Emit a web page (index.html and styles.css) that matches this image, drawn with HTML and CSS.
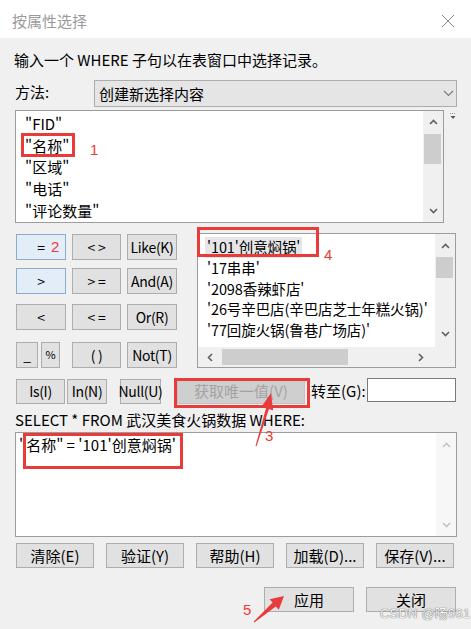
FILE: index.html
```html
<!DOCTYPE html>
<html lang="zh-CN">
<head>
<meta charset="utf-8">
<title>按属性选择</title>
<link rel="stylesheet" href="styles.css">
</head>
<body>
<div class="dialog">
  <div class="titlebar">
    <span class="title">按属性选择</span>
    <svg class="close" width="14" height="14" viewBox="0 0 14 14"><path d="M1 1L13 13M13 1L1 13" stroke="#8a8a8a" stroke-width="1" fill="none"/></svg>
  </div>

  <div class="content">
    <div class="prompt">输入一个 WHERE 子句以在表窗口中选择记录。</div>

    <div class="method">
      <span class="method-label">方法:</span>
      <div class="combo">
        <span>创建新选择内容</span>
        <svg width="11" height="7" viewBox="0 0 11 7"><path d="M1 1L5.5 5.5L10 1" fill="none" stroke="#7a7a7a" stroke-width="1.1"/></svg>
      </div>
    </div>

    <div class="fields-row">
      <div class="listbox fields">
        <ul class="items">
          <li>"FID"</li>
          <li>"名称"</li>
          <li>"区域"</li>
          <li>"电话"</li>
          <li>"评论数量"</li>
        </ul>
        <div class="vscroll">
          <div class="arrow up"><svg width="9" height="6" viewBox="0 0 9 6"><path d="M1 5L4.5 1.5L8 5" fill="none" stroke="#606060" stroke-width="1.6"/></svg></div>
          <div class="track"><div class="thumb fields-thumb"></div></div>
          <div class="arrow down"><svg width="9" height="6" viewBox="0 0 9 6"><path d="M1 1L4.5 4.5L8 1" fill="none" stroke="#606060" stroke-width="1.6"/></svg></div>
        </div>
      </div>
      <svg class="marker" width="6" height="7" viewBox="0 0 6 7"><path d="M0 0.5H6" stroke="#9a9a9a" stroke-width="1" stroke-dasharray="1 1"/><path d="M0.5 3H5.5L3 6Z" fill="#555"/></svg>
    </div>

    <div class="mid">
      <div class="ops">
        <div class="op-row">
          <button class="btn op hot">=</button>
          <button class="btn op">&lt; &gt;</button>
          <button class="btn op">Like(K)</button>
        </div>
        <div class="op-row gap8">
          <button class="btn op hot">&gt;</button>
          <button class="btn op">&gt; =</button>
          <button class="btn op">And(A)</button>
        </div>
        <div class="op-row gap10">
          <button class="btn op">&lt;</button>
          <button class="btn op">&lt; =</button>
          <button class="btn op">Or(R)</button>
        </div>
        <div class="op-row gap12">
          <div class="pair">
            <button class="btn op under">_</button>
            <button class="btn op pct">%</button>
          </div>
          <button class="btn op">( )</button>
          <button class="btn op">Not(T)</button>
        </div>
      </div>

      <div class="listbox values">
        <div class="values-main">
          <ul class="items">
            <li class="sel">'101'创意焖锅'</li>
            <li>'17串串'</li>
            <li>'2098香辣虾店'</li>
            <li>'26号辛巴店(辛巴店芝士年糕火锅)'</li>
            <li>'77回旋火锅(鲁巷广场店)'</li>
          </ul>
          <div class="vscroll">
            <div class="arrow up v-up"><svg width="9" height="6" viewBox="0 0 9 6"><path d="M1 5L4.5 1.5L8 5" fill="none" stroke="#606060" stroke-width="1.6"/></svg></div>
            <div class="track"><div class="thumb values-thumb"></div></div>
            <div class="arrow down v-down"><svg width="9" height="6" viewBox="0 0 9 6"><path d="M1 1L4.5 4.5L8 1" fill="none" stroke="#606060" stroke-width="1.6"/></svg></div>
          </div>
        </div>
        <div class="hscroll">
          <div class="harrow left"><svg width="6" height="9" viewBox="0 0 6 9"><path d="M5 1L1.5 4.5L5 8" fill="none" stroke="#606060" stroke-width="1.6"/></svg></div>
          <div class="hthumb"></div>
          <div class="hspace"></div>
          <div class="harrow right"><svg width="6" height="9" viewBox="0 0 6 9"><path d="M1 1L4.5 4.5L1 8" fill="none" stroke="#606060" stroke-width="1.6"/></svg></div>
          <div class="corner"></div>
        </div>
      </div>
    </div>

    <div class="row5">
      <button class="btn op w49">Is(I)</button>
      <button class="btn op w40 ml2">In(N)</button>
      <button class="btn op w41 ml13">Null(U)</button>
      <button class="btn disabled w128 ml16">获取唯一值(V)</button>
      <span class="goto">转至(G):</span>
      <div class="textbox"></div>
    </div>

    <div class="sql-label">SELECT * FROM 武汉美食火锅数据 WHERE:</div>

    <div class="expr">
      <div class="expr-text">"名称" = '101'创意焖锅'</div>
      <div class="vscroll light">
        <div class="arrow up e-up"><svg width="9" height="6" viewBox="0 0 9 6"><path d="M1 5L4.5 1.5L8 5" fill="none" stroke="#c4c4c4" stroke-width="1.6"/></svg></div>
        <div class="track"></div>
        <div class="arrow down e-down"><svg width="9" height="6" viewBox="0 0 9 6"><path d="M1 1L4.5 4.5L8 1" fill="none" stroke="#c4c4c4" stroke-width="1.6"/></svg></div>
      </div>
    </div>

    <div class="actions">
      <button class="btn w78">清除(E)</button>
      <button class="btn w78">验证(Y)</button>
      <button class="btn w78">帮助(H)</button>
      <button class="btn w78">加载(D)...</button>
      <button class="btn w78">保存(V)...</button>
    </div>

    <div class="final">
      <button class="btn w90">应用</button>
      <button class="btn w90">关闭</button>
    </div>
  </div>
</div>

<div class="anno">
  <div class="box b1"></div>
  <div class="box b4"></div>
  <div class="box b3"></div>
  <div class="box be"></div>
  <span class="num n1">1</span>
  <span class="num n2">2</span>
  <span class="num n3">3</span>
  <span class="num n4">4</span>
  <span class="num n5">5</span>
  <svg class="arrows" width="471" height="629" viewBox="0 0 471 629">
    <polygon fill="#ea3b3b" points="255.5,446 266.2,407.4 262,405.9 271,393 273.2,410.5 269,408.9 256.5,446.3"/>
    <polygon fill="#ea3b3b" points="253.7,621.6 272.6,602.6 269.6,599.2 284,596 278.8,609.8 275.8,606.4 254.3,622.4"/>
  </svg>
  <span class="watermark">CSDN @旸961</span>
</div>
</body>
</html>
```

FILE: styles.css
```css
* { box-sizing: border-box; margin: 0; padding: 0; }

html, body {
  width: 471px;
  height: 629px;
  overflow: hidden;
}

body {
  position: relative;
  background: #f0f0f0;
  font-family: "Noto Sans CJK SC", "Noto Sans", sans-serif;
  font-size: 15px;
  color: #000;
}

.titlebar {
  height: 38px;
  background: #fff;
  display: flex;
  align-items: center;
  justify-content: space-between;
  padding: 4px 16px 0 12px;
}

.title {
  color: #9a9a9a;
  line-height: 20px;
}

.content {
  padding: 0 14px 0 15px;
}

.prompt {
  margin-top: 12px;
  line-height: 20px;
  margin-left: -1px;
}

.method {
  margin-top: 10px;
  height: 27px;
  display: flex;
  align-items: center;
}

.method-label {
  width: 79px;
  line-height: 20px;
  margin-top: -3px;
}

.combo {
  flex: 1;
  height: 27px;
  background: #e5e5e5;
  border: 1px solid #adadad;
  display: flex;
  align-items: center;
  justify-content: space-between;
  padding: 0 2px 0 4px;
  line-height: 20px;
}

.fields-row {
  margin-top: 3px;
  display: flex;
  align-items: flex-start;
}

.listbox {
  background: #fff;
  border: 1px solid #9c9c9c;
}

.fields {
  width: 429px;
  height: 113px;
  display: flex;
}

.marker {
  margin-left: 6px;
  margin-top: 3px;
}

.items {
  list-style: none;
  flex: 1;
  overflow: hidden;
  white-space: nowrap;
  padding: 2px 0 0 7px;
}

.items li {
  padding: 0 2px;
  width: max-content;
}

.fields .items li {
  line-height: 21.7px;
}

.vscroll {
  width: 20px;
  background: #f0f0f0;
  display: flex;
  flex-direction: column;
}

.arrow {
  height: 22px;
  display: flex;
  align-items: center;
  justify-content: center;
  flex: none;
}

.track {
  flex: 1;
}

.thumb {
  background: #cdcdcd;
  margin: 0 2px 0 1px;
}

.fields-thumb {
  margin-top: 1px;
  height: 30px;
}

/* middle section */
.mid {
  margin-top: 10px;
  display: flex;
  align-items: flex-start;
}

.ops {
  margin-left: 1px;
  margin-top: 1px;
  width: 161px;
}

.op-row {
  display: grid;
  grid-template-columns: 50px 49px 50px;
  column-gap: 6px;
  height: 26px;
}

.gap8 { margin-top: 8px; }
.gap10 { margin-top: 10px; }
.gap12 { margin-top: 12px; }

.pair {
  display: flex;
  gap: 3px;
}

.btn {
  font-family: "Noto Sans CJK SC", "Noto Sans", sans-serif;
  font-size: 15px;
  line-height: 18px;
  color: #000;
  background: #e1e1e1;
  border: 1px solid #adadad;
  height: 26px;
  padding: 0;
  display: flex;
  align-items: center;
  justify-content: center;
  white-space: nowrap;
}

.btn.op {
  font-size: 14px;
  letter-spacing: -0.3px;
}

.btn.hot {
  background: #e3edf7;
  border-color: #8eabc9;
}

.under {
  width: 22px;
  align-items: flex-end;
  padding-bottom: 3px;
}

.btn.pct {
  width: 19px;
  font-size: 11px;
  padding-bottom: 3px;
}

.values {
  margin-left: 20px;
  width: 259px;
  height: 135px;
  display: flex;
  flex-direction: column;
}

.values-main {
  flex: 1;
  display: flex;
  min-height: 0;
}

.values .items {
  padding-top: 3px;
  font-size: 14.5px;
  letter-spacing: -0.1px;
}

.values .items li {
  line-height: 20.8px;
}

.values .items li.sel {
  background: #e6e6e6;
}

.v-up { height: 23px; }
.v-down { height: 26px; }

.values-thumb {
  height: 21px;
}

.hscroll {
  height: 20px;
  display: flex;
  background: #f0f0f0;
  flex: none;
}

.harrow {
  display: flex;
  align-items: center;
  justify-content: center;
}

.harrow.left { width: 24px; }
.harrow.right { width: 28px; }

.hthumb {
  width: 126px;
  margin: 2px 0 2px 0;
  background: #cdcdcd;
}

.hspace { flex: 1; }

.corner {
  width: 20px;
  background: #f0f0f0;
}

/* row 5 */
.row5 {
  margin-top: 9px;
  margin-left: 1px;
  display: flex;
  align-items: center;
  height: 26px;
}

.row5 .btn {
  height: 25px;
  margin-top: 2px;
}

.w49 { width: 49px; }
.w40 { width: 40px; }
.w41 { width: 41px; }
.w128 { width: 128px; }
.w78 { width: 78px; }
.w90 { width: 90px; }
.ml2 { margin-left: 2px; }
.ml13 { margin-left: 13px; }
.ml16 { margin-left: 16px; }

.btn.disabled {
  background: #cfcfcf;
  border-color: #c2c2c2;
  color: #a3a3a3;
}

.goto {
  margin-left: 6px;
  width: 56px;
  line-height: 20px;
  margin-top: 1px;
}

.textbox {
  width: 89px;
  height: 24px;
  background: #fff;
  border: 1px solid #7a7a7a;
  margin-top: -1px;
}

.sql-label {
  margin-top: 7px;
  line-height: 20px;
}

.expr {
  margin-top: 2px;
  height: 105px;
  background: #fff;
  border: 1px solid #9c9c9c;
  display: flex;
}

.expr-text {
  flex: 1;
  padding: 2px 0 0 3px;
  line-height: 20px;
}

.vscroll.light {
  background: #f7f7f7;
}

.e-up { height: 24px; }
.e-down { height: 22px; }

.actions {
  margin-top: 6px;
  margin-left: 1px;
  display: flex;
  gap: 12px;
}

.actions .btn { height: 25px; }

.final {
  margin-top: 19px;
  margin-right: 1px;
  display: flex;
  justify-content: flex-end;
  gap: 12px;
}

.final .btn { height: 25px; }

/* annotations */
.anno {
  position: absolute;
  left: 0;
  top: 0;
  width: 471px;
  height: 629px;
  pointer-events: none;
}

.box {
  position: absolute;
  border: 3px solid #ea3b3b;
}

.b1 { left: 21px; top: 133px; width: 54px; height: 24px; }
.b4 { left: 197px; top: 227px; width: 122px; height: 30px; }
.b3 { left: 174px; top: 378px; width: 136px; height: 30px; }
.be { left: 23px; top: 433px; width: 160px; height: 36px; }

.num {
  position: absolute;
  color: #ea3b3b;
  font-family: "Liberation Sans", sans-serif;
  font-size: 15px;
  line-height: 16px;
}

.n1 { left: 90px; top: 142px; }
.n2 { left: 51px; top: 239px; }
.n3 { left: 265px; top: 428px; }
.n4 { left: 324px; top: 247px; }
.n5 { left: 243px; top: 602px; }

.arrows {
  position: absolute;
  left: 0;
  top: 0;
}

.watermark {
  position: absolute;
  left: 380px;
  top: 605px;
  font-family: "Liberation Sans", "Noto Sans CJK SC", sans-serif;
  font-size: 13px;
  line-height: 18px;
  color: #f4f4f4;
  text-shadow: 0 0 1px #6f6f6f, 0 0 1px #6f6f6f;
  letter-spacing: 0.2px;
}
```
